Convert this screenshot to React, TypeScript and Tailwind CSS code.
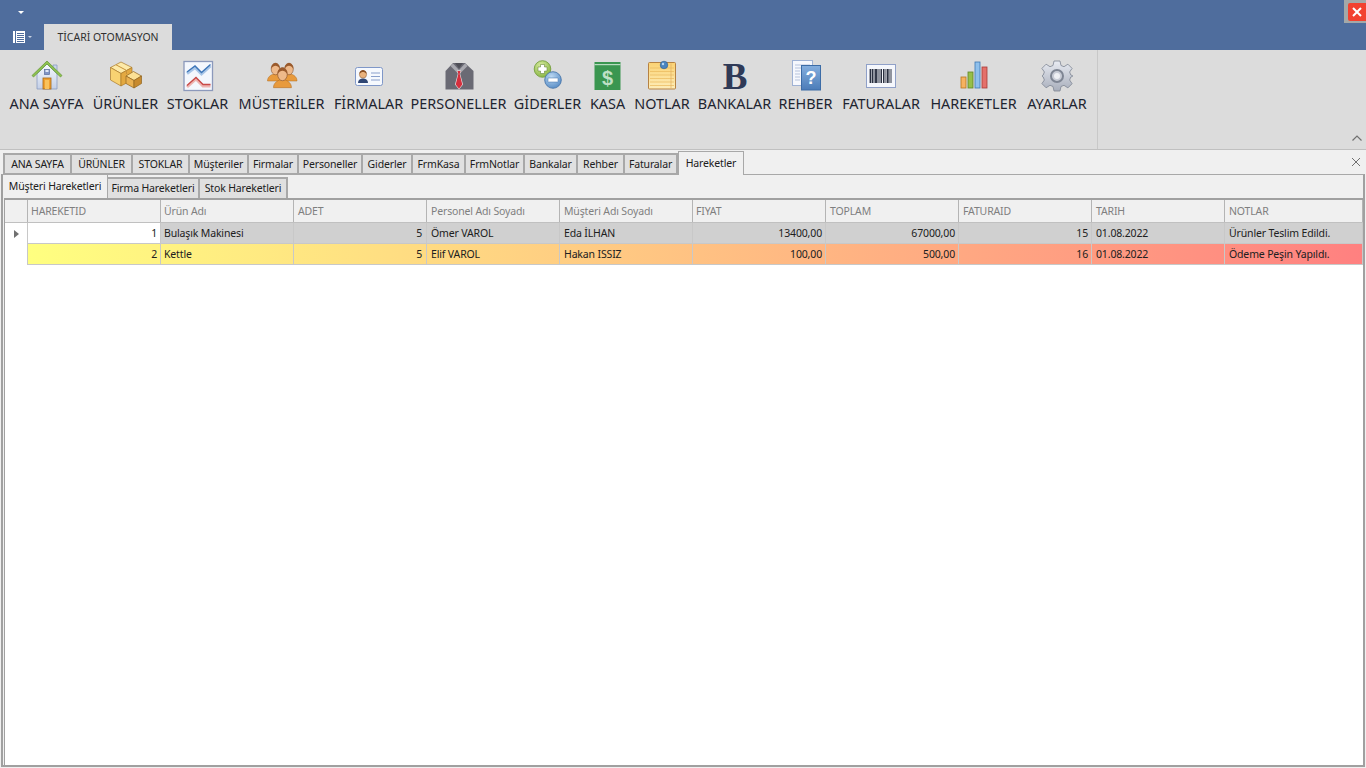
import type { ReactNode } from "react";

const Home = () => (
  <svg viewBox="0 0 32 32" className="h-8 w-8">
    <defs>
      <linearGradient id="wall" x1="0" y1="0" x2="0" y2="1">
        <stop offset="0" stopColor="#f8fafe" />
        <stop offset="1" stopColor="#c3cfe6" />
      </linearGradient>
    </defs>
    <path d="M22 5h4v10h-4z" fill="#c9d5ea" stroke="#8b9cc0" strokeWidth="0.8" />
    <path d="M6 14 16 4l10 10v15H6z" fill="url(#wall)" stroke="#8b9cc0" strokeWidth="0.8" />
    <path d="M1 15.500 16 1l15 14.500-1.500 1.500L16 4 2.500 17z" fill="#8fc24f" stroke="#5f9333" strokeWidth="0.7" />
    <rect x="13.500" y="9.500" width="5" height="5" fill="#8094c4" stroke="#5a6c9c" strokeWidth="0.7" />
    <rect x="14.500" y="10" width="3" height="2" fill="#dfe7f6" />
    <rect x="12" y="18" width="8" height="11" fill="#f0a030" stroke="#a46618" strokeWidth="0.8" />
    <rect x="14" y="20" width="4" height="9" fill="#f9c25c" />
  </svg>
);

const Boxes = () => (
  <svg viewBox="0 0 32 32" className="h-8 w-8">
    <path d="M0.500 7.500 11 2l11 5.500-11 6z" fill="#fdeaa8" stroke="#a9782a" strokeWidth="0.7" />
    <path d="M0.500 7.500 11 13.500V26L0.500 20z" fill="#f8d272" stroke="#a9782a" strokeWidth="0.7" />
    <path d="M11 13.500l11-6V20l-11 6z" fill="#e3a941" stroke="#a9782a" strokeWidth="0.7" />
    <path d="M6 4.800l10.500 5.600V14" fill="none" stroke="#c8923a" strokeWidth="1" />
    <path d="M16 16l7.500-4.500L31.500 16 24 20.500z" fill="#fbe095" stroke="#8f6420" strokeWidth="0.7" />
    <path d="M16 16l8 4.500V28l-8-4.500z" fill="#eab252" stroke="#8f6420" strokeWidth="0.7" />
    <path d="M24 20.500l7.500-4.500v7.500L24 28z" fill="#c78a2e" stroke="#8f6420" strokeWidth="0.7" />
  </svg>
);

const Stocks = () => (
  <svg viewBox="0 0 32 32" className="h-8 w-8">
    <rect x="2" y="1.500" width="28.500" height="29" fill="#f4f7fd" stroke="#8c99bb" strokeWidth="1.300" />
    <path d="M5 13.500l8-6 6.500 6.500 9-8" fill="none" stroke="#a9c6e8" strokeWidth="3" />
    <path d="M5 12l8-6 6.500 6.500 9-8" fill="none" stroke="#3e76b8" strokeWidth="1.400" />
    <path d="M5 27l9-8 7 7h7.500" fill="none" stroke="#eeb5b2" strokeWidth="3" />
    <path d="M5 25.500l9-8 7 7h7.500" fill="none" stroke="#c84a48" strokeWidth="1.400" />
  </svg>
);

const Person = ({ x, y, s }: { x: number; y: number; s: number }) => (
  <g transform={`translate(${x} ${y}) scale(${s})`}>
    <path d="M0 18c0-4 3-6 6-7h4c3 1 6 3 6 7z" fill="#e89a3c" stroke="#b06c20" strokeWidth="0.5" />
    <ellipse cx="8" cy="6" rx="4.300" ry="5.800" fill="#eeb98a" stroke="#8a5530" strokeWidth="0.6" />
    <path d="M3.700 6C3.500 2 6 0 8 0s4.500 2 4.300 6c-1-2.400-3-3.200-4.300-3.200S4.700 3.600 3.700 6z" fill="#9a5a2c" />
  </g>
);

const Customers = () => (
  <svg viewBox="0 0 32 32" className="h-8 w-8">
    <Person x={1.500} y={3} s={1} />
    <Person x={15} y={3} s={1} />
    <Person x={7.500} y={7.500} s={1.120} />
  </svg>
);

const Card = () => (
  <svg viewBox="0 0 32 32" className="h-8 w-8">
    <rect x="2.500" y="7.500" width="27" height="18" rx="2" fill="#f6f9fe" stroke="#7f97c8" strokeWidth="1" />
    <path d="M5 23c0-3 2-4 4-4.500h2c2 .5 4 1.500 4 4.500z" fill="#2f4674" />
    <circle cx="10" cy="14.500" r="3.600" fill="#eab27c" stroke="#87552c" strokeWidth="0.5" />
    <path d="M6.400 14c0-3 2-4 3.600-4s3.600 1 3.600 4c-1-1.600-2.400-2-3.600-2s-2.600.4-3.600 2z" fill="#8a4f22" />
    <path d="M18 13h9M18 16.500h9M18 20h9" stroke="#8aa0cc" strokeWidth="1" />
  </svg>
);

const Staff = () => (
  <svg viewBox="0 0 32 32" className="h-8 w-8">
    <path d="M10 3h12l8.500 8v18.500h-28V11z" fill="#6a6a74" />
    <path d="M10 3.500 16 10l6-6.500 2.500 2.500L17.500 13h-3L7.500 6z" fill="#a9a9b0" />
    <path d="M12 3h8l-4 5.500z" fill="#4f4f58" />
    <path d="M14 10.500h4l-.8 3.500 2.800 10.500-4 5-4-5L14.800 14z" fill="#ece8e8" />
    <path d="M14.500 11h3l-.8 3 2.600 10.500-3.300 4.300-3.300-4.300L15.300 14z" fill="#d52f3e" />
  </svg>
);

const PlusMinus = () => (
  <svg viewBox="0 0 32 32" className="h-8 w-8">
    <defs>
      <radialGradient id="gr" cx="0.4" cy="0.3" r="0.8">
        <stop offset="0" stopColor="#d8eca0" />
        <stop offset="1" stopColor="#7fae3a" />
      </radialGradient>
      <radialGradient id="bl" cx="0.4" cy="0.3" r="0.8">
        <stop offset="0" stopColor="#bcd8f2" />
        <stop offset="1" stopColor="#4f86c2" />
      </radialGradient>
    </defs>
    <circle cx="10.500" cy="9" r="8.300" fill="url(#gr)" stroke="#6f9a35" strokeWidth="0.8" />
    <path d="M8.500 4.500h4V7H15v4h-2.500v2.500h-4V11H6V7h2.500z" fill="#fff" stroke="#55752b" strokeWidth="0.5" />
    <circle cx="21" cy="20" r="8.300" fill="url(#bl)" stroke="#3f6fa6" strokeWidth="0.8" />
    <rect x="16" y="18" width="10" height="4" rx="0.5" fill="#fff" stroke="#3f6fa6" strokeWidth="0.5" />
  </svg>
);

const Cash = () => (
  <svg viewBox="0 0 32 32" className="h-8 w-8">
    <rect x="2.500" y="2" width="26" height="28" fill="#3a9650" />
    <rect x="2.500" y="4" width="26" height="1.200" fill="#b8dcc0" />
    <text x="15.500" y="25" textAnchor="middle" fontSize="20" fontWeight="700" fill="#bfe0c6" fontFamily="Liberation Sans, sans-serif">$</text>
  </svg>
);

const Note = () => (
  <svg viewBox="0 0 32 32" className="h-8 w-8">
    <defs>
      <linearGradient id="nt" x1="0" y1="0" x2="0" y2="1">
        <stop offset="0" stopColor="#fbd273" />
        <stop offset="1" stopColor="#fdedba" />
      </linearGradient>
    </defs>
    <rect x="2.500" y="2.500" width="27" height="26.500" rx="1" fill="url(#nt)" stroke="#b68242" strokeWidth="1" />
    <path d="M4 8h24M4 11.500h24M4 15h24M4 18.500h24M4 22h24M4 25.500h24" stroke="#eab95c" strokeWidth="0.7" />
    <path d="M25 3.500v25" stroke="#e2b062" strokeWidth="0.7" />
    <circle cx="18" cy="5" r="3.800" fill="#4b85c0" stroke="#2c5b8e" strokeWidth="0.6" />
    <circle cx="17" cy="4" r="1.200" fill="#b6d5f1" />
  </svg>
);

const BoldB = () => (
  <svg viewBox="0 0 32 32" className="h-8 w-8 overflow-visible">
    <text x="16" y="29" textAnchor="middle" fontSize="37" fontWeight="700" fill="#2f3a57" fontFamily="Liberation Serif, serif">B</text>
  </svg>
);

const Help = () => (
  <svg viewBox="0 0 32 32" className="h-8 w-8">
    <defs>
      <linearGradient id="hp" x1="0" y1="0" x2="0" y2="1">
        <stop offset="0" stopColor="#84aede" />
        <stop offset="1" stopColor="#4b7cb8" />
      </linearGradient>
    </defs>
    <rect x="2.500" y="0.500" width="20" height="25" fill="#f6f8fd" stroke="#9fb2d4" strokeWidth="1" />
    <path d="M5 5h15M5 8h15M5 11h5M5 14h5M5 17h5M5 20h5" stroke="#b6c3dc" strokeWidth="1" />
    <rect x="11.500" y="5.500" width="19" height="24.500" fill="url(#hp)" stroke="#3c6ca6" strokeWidth="1" />
    <text x="21" y="24" textAnchor="middle" fontSize="18" fontWeight="700" fill="#fff" fontFamily="Liberation Sans, sans-serif">?</text>
  </svg>
);

const Barcode = () => (
  <svg viewBox="0 0 32 32" className="h-8 w-8">
    <rect x="1.500" y="4.500" width="29" height="23" fill="#f5f7fc" stroke="#8fa0c8" strokeWidth="1" />
    <path d="M5.500 9v14M7.500 9v14M9 9v14M11 9v14M13 9v14M15 9v14M16.500 9v14M18.500 9v14M20 9v14M22.500 9v14M24 9v14M26 9v14" stroke="#2a3040" strokeWidth="1" />
    <path d="M5.500 9v14M11 9v14M22.500 9v14" stroke="#2a3040" strokeWidth="1.800" />
  </svg>
);

const Bars = () => (
  <svg viewBox="0 0 32 32" className="h-8 w-8">
    <rect x="3" y="17" width="5" height="11" fill="#f6b260" stroke="#b87620" strokeWidth="0.8" />
    <rect x="10" y="12" width="5" height="16" fill="#97bf48" stroke="#5f8526" strokeWidth="0.8" />
    <rect x="17" y="2" width="5" height="26" fill="#8fc0ec" stroke="#3c78b4" strokeWidth="0.8" />
    <rect x="24" y="7" width="5" height="21" fill="#e4706a" stroke="#a83a38" strokeWidth="0.8" />
  </svg>
);

const Gear = () => (
  <svg viewBox="0 0 32 32" className="h-8 w-8">
    <defs>
      <linearGradient id="gear" x1="0" y1="0" x2="0" y2="1">
        <stop offset="0" stopColor="#e8ebf2" />
        <stop offset="1" stopColor="#a8aebb" />
      </linearGradient>
    </defs>
    <path
      d="M13 1h6l1 4.500 3 1.200 3.900-2.500 4.200 4.200L28.600 12l1.200 3 .2 0 1.900 1-1.900 1-.2 0-1.200 3 2.500 3.700-4.200 4.200L23 25.300l-3 1.200L19 31h-6l-1-4.500-3-1.200-3.900 2.500-4.200-4.200L3.400 20l-1.200-3L1 16l1.200-1 1.200-3L.9 8.400l4.200-4.200L9 6.700l3-1.200z"
      fill="url(#gear)"
      stroke="#7e8593"
      strokeWidth="0.8"
    />
    <circle cx="16" cy="16" r="6" fill="#c8ccd6" stroke="#7e8593" strokeWidth="2" />
    <circle cx="16" cy="16" r="3" fill="#eef0f4" />
  </svg>
);

const ribbonItems: { label: string; width: string; icon: ReactNode }[] = [
  { label: "ANA SAYFA", width: "w-[77px]", icon: <Home /> },
  { label: "ÜRÜNLER", width: "w-[63px]", icon: <Boxes /> },
  { label: "STOKLAR", width: "w-[63px]", icon: <Stocks /> },
  { label: "MÜSTERİLER", width: "w-[87px]", icon: <Customers /> },
  { label: "FİRMALAR", width: "w-[69px]", icon: <Card /> },
  { label: "PERSONELLER", width: "w-[93px]", icon: <Staff /> },
  { label: "GİDERLER", width: "w-[67px]", icon: <PlusMinus /> },
  { label: "KASA", width: "w-[35px]", icon: <Cash /> },
  { label: "NOTLAR", width: "w-[56px]", icon: <Note /> },
  { label: "BANKALAR", width: "w-[71px]", icon: <BoldB /> },
  { label: "REHBER", width: "w-[53px]", icon: <Help /> },
  { label: "FATURALAR", width: "w-[80px]", icon: <Barcode /> },
  { label: "HAREKETLER", width: "w-[87px]", icon: <Bars /> },
  { label: "AYARLAR", width: "w-[62px]", icon: <Gear /> },
];

const pageTabs = [
  { label: "ANA SAYFA", width: "w-[69px] border-l-2" },
  { label: "ÜRÜNLER", width: "w-[61px]" },
  { label: "STOKLAR", width: "w-[57px]" },
  { label: "Müşteriler", width: "w-[59px]" },
  { label: "Firmalar", width: "w-[50px]" },
  { label: "Personeller", width: "w-[64px]" },
  { label: "Giderler", width: "w-[50px]" },
  { label: "FrmKasa", width: "w-[53px]" },
  { label: "FrmNotlar", width: "w-[59px]" },
  { label: "Bankalar", width: "w-[53px]" },
  { label: "Rehber", width: "w-[47px]" },
  { label: "Faturalar", width: "w-[53px]" },
];

// pad differs by a pixel between columns in the original grid
const columns = [
  { label: "HAREKETID", width: "w-[133px]", pad: "pl-[3px] pr-[3px]" },
  { label: "Ürün Adı", width: "w-[133px]", pad: "pl-[3px] pr-[3px]" },
  { label: "ADET", width: "w-[133px]", pad: "pl-[4px] pr-[4px]" },
  { label: "Personel Adı Soyadı", width: "w-[133px]", pad: "pl-[4px] pr-[3px]" },
  { label: "Müşteri Adı Soyadı", width: "w-[133px]", pad: "pl-[4px] pr-[3px]" },
  { label: "FIYAT", width: "w-[133px]", pad: "pl-[3px] pr-[3px]" },
  { label: "TOPLAM", width: "w-[133px]", pad: "pl-[4px] pr-[3px]" },
  { label: "FATURAID", width: "w-[133px]", pad: "pl-[4px] pr-[3px]" },
  { label: "TARIH", width: "w-[133px]", pad: "pl-[4px] pr-[3px]" },
  { label: "NOTLAR", width: "w-[138px]", pad: "pl-[4px] pr-[3px]" },
];

const rows = [
  ["1", "Bulaşık Makinesi", "5", "Ömer VAROL", "Eda İLHAN", "13400,00", "67000,00", "15", "01.08.2022", "Ürünler Teslim Edildi."],
  ["2", "Kettle", "5", "Elif VAROL", "Hakan ISSIZ", "100,00", "500,00", "16", "01.08.2022", "Ödeme Peşin Yapıldı."],
];

const rightAligned = [0, 2, 5, 6, 7];

export default function App() {
  return (
    <div className="flex h-[768px] w-[1366px] flex-col overflow-hidden bg-[#f0f0f0] font-['Noto_Sans','Liberation_Sans',sans-serif] text-[10.5px] tracking-[-0.15px] text-[#202020]">
      {/* title bar + ribbon tab */}
      <div className="flex h-[50px] shrink-0 flex-col bg-[#4f6d9d]">
        <div className="flex h-6 items-start justify-between">
          <div className="mt-[11px] ml-[18px] h-0 w-0 border-x-[3px] border-t-[3px] border-x-transparent border-t-white" />
          <div className="flex h-[23px] w-[22px] items-center justify-end bg-[#a3a8a8] pt-px">
            <div className="flex h-[18px] w-[18px] items-center justify-center rounded-l-[2px] bg-[#f2412f]">
              <svg viewBox="0 0 12 12" className="h-3 w-3">
                <path d="M2 2l8 8M10 2l-8 8" stroke="#fff" strokeWidth="2" />
              </svg>
            </div>
          </div>
        </div>
        <div className="flex h-[26px] items-stretch">
          <div className="flex w-[44px] items-center pl-3">
            <svg viewBox="0 0 14 14" className="h-[14px] w-[14px]">
              <path d="M1 1h12v12H1z" fill="#fff" />
              <path d="M3.500 1v12" stroke="#4f6d9d" strokeWidth="1" />
              <path d="M5 3.500h7M5 5.500h7M5 7.500h7M5 9.500h7M5 11.500h7" stroke="#4f6d9d" strokeWidth="1" />
            </svg>
            <div className="ml-[2px] h-0 w-0 border-x-2 border-t-2 border-x-transparent border-t-[#c8d2e2]" />
          </div>
          <div className="flex w-[128px] items-center justify-center bg-[#dcdcdc] pt-px tracking-normal text-[#303030]">
            TİCARİ OTOMASYON
          </div>
        </div>
      </div>

      {/* ribbon */}
      <div className="flex h-[100px] shrink-0 border-b border-[#c0c0c0] bg-[#dcdcdc]">
        <div className="flex w-[1098px] gap-[9px] border-r border-[#c8c8c8] pt-[10px] pl-2">
          {ribbonItems.map(item => (
            <div key={item.label} className={`flex shrink-0 flex-col items-center ${item.width}`}>
              {item.icon}
              <div className="mt-[2px] text-[14.4px] leading-5 tracking-normal whitespace-nowrap text-[#1e2430]">{item.label}</div>
            </div>
          ))}
        </div>
        <div className="flex flex-1 items-end justify-end pr-[4px] pb-[8px]">
          <svg viewBox="0 0 10 6" className="h-[6px] w-[10px]">
            <path d="M0.500 5.500 5 1l4.500 4.500" fill="none" stroke="#707070" strokeWidth="1.200" />
          </svg>
        </div>
      </div>

      {/* page tabs */}
      <div className="flex h-[24px] shrink-0 items-end justify-between pl-[3px]">
        <div className="flex items-end">
          {pageTabs.map(tab => (
            <div
              key={tab.label}
              className={`flex h-[21px] items-center justify-center border-t-2 border-r-2 border-b border-[#a8a8a8] bg-[#e0e0e0] pt-px ${tab.width}`}
            >
              {tab.label}
            </div>
          ))}
          <div className="relative z-10 -mb-px flex h-[24px] w-[66px] items-start justify-center border-x border-t border-[#a8a8a8] bg-[#f0f0f0] pt-[4px]">
            Hareketler
          </div>
        </div>
        <div className="mr-[5px] self-center">
          <svg viewBox="0 0 10 10" className="h-[10px] w-[10px]">
            <path d="M1 1l8 8M9 1l-8 8" stroke="#707070" strokeWidth="1" />
          </svg>
        </div>
      </div>

      {/* page body */}
      <div className="mx-px mb-px flex min-h-0 flex-1 flex-col border-x-2 border-t border-b-2 border-x-[#a0a0a0] border-t-[#a8a8a8] border-b-[#a0a0a0]">
        <div className="flex h-[23px] shrink-0 items-end">
          <div className="flex h-[23px] w-[105px] items-center justify-center border-r border-[#a8a8a8] bg-[#f0f0f0] pt-px">
            Müşteri Hareketleri
          </div>
          <div className="flex h-[21px] w-[92px] items-center justify-center border-t-2 border-r-2 border-[#a8a8a8] bg-[#e0e0e0] pt-px">
            Firma Hareketleri
          </div>
          <div className="flex h-[21px] w-[88px] items-center justify-center border-t-2 border-r-2 border-[#a8a8a8] bg-[#e0e0e0] pt-px">
            Stok Hareketleri
          </div>
        </div>

        {/* grid */}
        <div className="ml-px min-h-0 flex-1 overflow-hidden border-t-2 border-l border-[#a0a0a0] bg-white">
          <div className="flex h-[23px] border-b border-[#c0c0c0] bg-[#f0f0f0]">
            <div className="w-[23px] shrink-0 border-r border-[#b4b4b4]" />
            {columns.map(col => (
              <div key={col.label} className={`flex shrink-0 items-center border-r border-[#b4b4b4] pt-px text-[#7f7f7f] ${col.width} ${col.pad}`}>
                {col.label}
              </div>
            ))}
          </div>
          {rows.map((row, r) => (
            <div key={row[0]} className="flex h-[21px]">
              <div className="flex w-[23px] shrink-0 items-center justify-center border-r border-[#c8c8c8] bg-white">
                {r === 0 && <div className="h-0 w-0 border-y-4 border-l-[5px] border-y-transparent border-l-[#707070]" />}
              </div>
              <div className={`flex min-w-0 flex-1 ${r === 0 ? "bg-[#d0d0d0]" : "bg-gradient-to-r from-[#ffff80] to-[#ff8080]"}`}>
                {row.map((cell, c) => (
                  <div
                    key={c}
                    className={`flex shrink-0 items-center border-r border-b border-[#c8c8c8] pt-px whitespace-nowrap ${columns[c].width} ${columns[c].pad} ${rightAligned.includes(c) ? "justify-end" : ""} ${r === 0 && c === 0 ? "bg-white" : ""}`}
                  >
                    {cell}
                  </div>
                ))}
              </div>
            </div>
          ))}
        </div>
      </div>
    </div>
  );
}
